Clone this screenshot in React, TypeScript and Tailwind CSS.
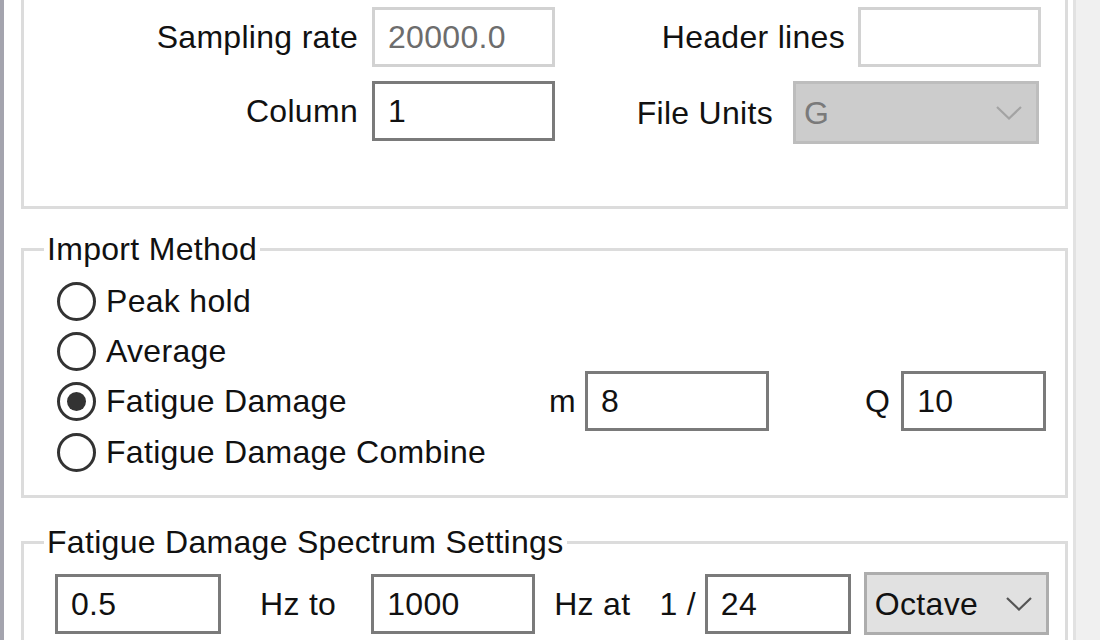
import type { ReactNode } from 'react';

function cn(...parts: Array<string | false | undefined>) {
  return parts.filter(Boolean).join(' ');
}

function TextBox({
  value,
  width,
  tone = 'normal',
}: {
  value: string;
  width: string;
  tone?: 'normal' | 'light' | 'disabled';
}) {
  return (
    <div
      className={cn(
        'flex h-[60px] shrink-0 items-center border-[3px] bg-white pl-[13px]',
        tone === 'normal' ? 'border-[#7a7a7a]' : 'border-[#d2d2d2]',
        tone === 'disabled' ? 'text-[#6d6d6d]' : 'text-[#111]',
        width,
      )}
    >
      {value}
    </div>
  );
}

function Chevron({ color }: { color: string }) {
  return (
    <svg width="26" height="14" viewBox="0 0 26 14" fill="none" className="shrink-0">
      <polyline points="1,1 13,12.5 25,1" stroke={color} strokeWidth="2.2" />
    </svg>
  );
}

function Combo({ value, width, disabled }: { value: string; width: string; disabled?: boolean }) {
  return (
    <div
      className={cn(
        'flex h-[63px] shrink-0 items-center justify-between border-[3px] pl-[8px] pr-[14px]',
        width,
        disabled
          ? 'border-[#bdbdbd] bg-[#cccccc] text-[#7a7a7a]'
          : 'border-[#adadad] bg-[#e1e1e1] text-[#111]',
      )}
    >
      <span>{value}</span>
      <Chevron color={disabled ? '#a3a3a3' : '#555555'} />
    </div>
  );
}

function Radio({ label, checked }: { label: string; checked?: boolean }) {
  return (
    <div className="flex items-center">
      <span className="flex h-[39px] w-[39px] shrink-0 items-center justify-center rounded-full border-[3px] border-[#333] bg-white">
        {checked ? <span className="h-[19px] w-[19px] rounded-full bg-[#333]" /> : null}
      </span>
      <span className="ml-[10px]">{label}</span>
    </div>
  );
}

function Group({ title, className, children }: { title: string; className?: string; children: ReactNode }) {
  return (
    <fieldset className={cn('border-[3px] border-[#dcdcdc]', className)}>
      <legend className="ml-[20px] px-[3px] leading-[36px]">{title}</legend>
      {children}
    </fieldset>
  );
}

export default function App() {
  return (
    <div className="flex h-[640px] w-[1100px] overflow-hidden bg-white font-['Liberation_Sans',Arial,sans-serif] text-[32px] leading-none tracking-[0.3px] text-[#111]">
      <div className="w-[4px] shrink-0 bg-[#a4a4ae]" />

      <div className="flex w-[1069px] shrink-0 flex-col pl-[17px] pr-[5px]">
        {/* file settings, its top edge is scrolled out of view */}
        <div className="-mt-[40px] border-[3px] border-[#dcdcdc] pb-[62px] pt-[44px]">
          <div className="flex h-[60px] items-center">
            <span className="w-[334px] shrink-0 text-right">Sampling rate</span>
            <div className="ml-[14px]">
              <TextBox value="20000.0" width="w-[183px]" tone="disabled" />
            </div>
            <span className="w-[290px] shrink-0 text-right">Header lines</span>
            <div className="ml-[13px]">
              <TextBox value="" width="w-[183px]" tone="light" />
            </div>
          </div>
          <div className="mt-[14px] flex h-[63px] items-start">
            <span className="flex h-[60px] w-[334px] shrink-0 items-center justify-end">Column</span>
            <div className="ml-[14px]">
              <TextBox value="1" width="w-[183px]" />
            </div>
            <span className="flex h-[63px] w-[218px] shrink-0 items-center justify-end">File Units</span>
            <div className="ml-[20px]">
              <Combo value="G" width="w-[246px]" disabled />
            </div>
          </div>
        </div>

        <Group title="Import Method" className="mt-[22px] pb-[17px]">
          <div className="flex flex-col pl-[33px] pt-[9px]">
            <div className="flex h-[50px] items-center">
              <Radio label="Peak hold" />
            </div>
            <div className="flex h-[50px] items-center">
              <Radio label="Average" />
            </div>
            <div className="flex h-[50px] items-center">
              <div className="w-[492px] shrink-0">
                <Radio label="Fatigue Damage" checked />
              </div>
              <span>m</span>
              <div className="ml-[9px]">
                <TextBox value="8" width="w-[184px]" />
              </div>
              <span className="ml-[96px]">Q</span>
              <div className="ml-[11px]">
                <TextBox value="10" width="w-[145px]" />
              </div>
            </div>
            <div className="flex h-[52px] items-center">
              <Radio label="Fatigue Damage Combine" />
            </div>
          </div>
        </Group>

        <Group title="Fatigue Damage Spectrum Settings" className="mt-[26px] pb-[40px]">
          <div className="flex items-center pl-[31px] pt-[12px]">
            <TextBox value="0.5" width="w-[166px]" />
            <span className="ml-[39px]">Hz to</span>
            <div className="ml-[35px]">
              <TextBox value="1000" width="w-[164px]" />
            </div>
            <span className="ml-[19px]">Hz at</span>
            <span className="ml-[29px]">1 /</span>
            <div className="ml-[9px]">
              <TextBox value="24" width="w-[146px]" />
            </div>
            <div className="ml-[13px]">
              <Combo value="Octave" width="w-[185px]" />
            </div>
          </div>
        </Group>
      </div>

      <div className="flex-1 border-l-[3px] border-[#e2e2e2] bg-[#f0f0f0]" />
    </div>
  );
}
